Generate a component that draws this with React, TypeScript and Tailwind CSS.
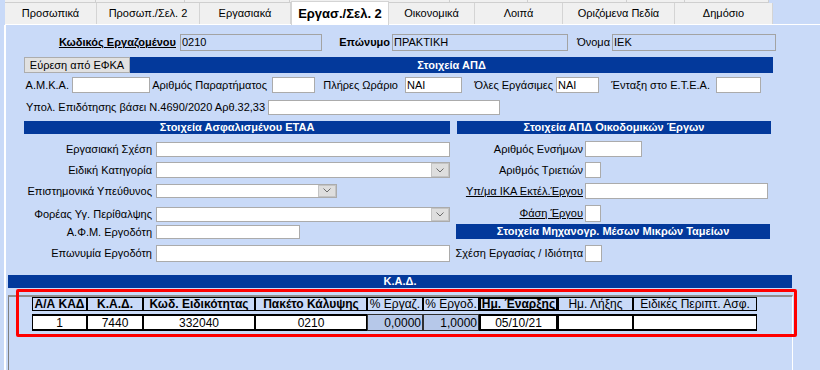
import React from 'react';

const TABS = [
  { label: 'Προσωπικά', w: 'w-[92px]' },
  { label: 'Προσωπ./Σελ. 2', w: 'w-[103px]' },
  { label: 'Εργασιακά', w: 'w-[91px]' },
  { label: 'Εργασ./Σελ. 2', w: 'w-[98px]', active: true },
  { label: 'Οικονομικά', w: 'w-[86px]' },
  { label: 'Λοιπά', w: 'w-[88px]' },
  { label: 'Οριζόμενα Πεδία', w: 'w-[112px]' },
  { label: 'Δημόσιο', w: 'w-[98px]' },
];

// second tab row, hidden behind the first one
const BACK_TABS = ['w-[91px]', 'w-[89px]', 'w-[105px]', 'w-[160px]', 'w-[78px]', 'w-[99px]', 'w-[58px]', 'w-[84px]'];

function Chevron() {
  return (
    <svg width="8" height="5" viewBox="0 0 8 5">
      <path d="M0.5 0.5 L4 4 L7.5 0.5" fill="none" stroke="#6b6b6b" strokeWidth="1" />
    </svg>
  );
}

interface FieldProps {
  className: string;
  value?: string;
  dropdown?: boolean;
  disabled?: boolean;
}

function Field({ className, value, dropdown, disabled }: FieldProps) {
  return (
    <div
      className={`flex shrink-0 items-center border ${
        disabled ? 'border-[#a3a3a3] bg-[#c9daf8]' : 'border-[#ababab] bg-white'
      } ${className}`}
    >
      <span className="flex-1 truncate pl-[1px] leading-none">{value}</span>
      {dropdown && (
        <span className="flex h-full w-[18px] items-end justify-center border border-[#c4c4c4] bg-[#dedede] pb-[3px]">
          <Chevron />
        </span>
      )}
    </div>
  );
}

function Bar({ className, children }: { className: string; children: React.ReactNode }) {
  return (
    <div className={`flex shrink-0 items-center justify-center bg-[#03399b] font-bold leading-none text-white ${className}`}>
      {children}
    </div>
  );
}

const COLS = [
  { h: 'Α/Α ΚΑΔ', v: '1', w: 'w-[55px]', bold: true },
  { h: 'Κ.Α.Δ.', v: '7440', w: 'w-[56px]', bold: true },
  { h: 'Κωδ. Ειδικότητας', v: '332040', w: 'w-[112px]', bold: true },
  { h: 'Πακέτο Κάλυψης', v: '0210', w: 'w-[112px]', bold: true },
  { h: '% Εργαζ.', v: '0,0000', w: 'w-[56px]', pct: true },
  { h: '% Εργοδ.', v: '1,0000', w: 'w-[56px]', pct: true },
  { h: 'Ημ. Έναρξης', v: '05/10/21', w: 'w-[79px]', bold: true, focus: true },
  { h: 'Ημ. Λήξης', v: '', w: 'w-[75px]' },
  { h: 'Ειδικές Περιπτ. Ασφ.', v: '', w: 'w-[124px]' },
];

export default function App() {
  return (
    <div className="relative flex h-[370px] w-[820px] flex-col overflow-hidden bg-[#c9daf8] font-['Liberation_Sans',Arial,sans-serif] text-[11px] text-black">
      {/* tab strip */}
      <div className="flex h-[3px] pl-[5px]">
        {BACK_TABS.map((w, i) => (
          <div key={i} className={`${w} border-r border-b border-[#cfcfcf] bg-[#f0f0f0]`} />
        ))}
      </div>
      <div className="flex h-[21px] pl-[5px]">
        {TABS.map((t) =>
          t.active ? (
            <div
              key={t.label}
              className={`${t.w} relative z-10 -mt-[2px] flex h-[24px] items-center justify-center border-x border-t border-[#d4d4d4] bg-white text-[13px] font-bold`}
            >
              {t.label}
            </div>
          ) : (
            <div
              key={t.label}
              className={`${t.w} flex items-center justify-center border-r border-[#d4d4d4] bg-[#f0f0f0]`}
            >
              {t.label}
            </div>
          ),
        )}
      </div>
      <div className="ml-[5px] h-px bg-white" />

      {/* panel */}
      <div className="flex flex-1 flex-col bg-[linear-gradient(to_right,#c9daf8_4px,#ffffff_4px,#ffffff_6px,#c9daf8_6px)]">
        {/* row 1 */}
        <div className="mt-[9px] flex h-[17px] items-stretch">
          <div className="flex w-[178px] items-center justify-end pr-[2px] font-bold underline">Κωδικός Εργαζομένου</div>
          <Field className="ml-[2px] w-[142px]" value="0210" disabled />
          <div className="flex w-[70px] items-center justify-end pr-[2px] font-bold">Επώνυμο</div>
          <Field className="w-[176px]" value="ΠΡΑΚΤΙΚΗ" disabled />
          <div className="flex w-[44px] items-center justify-end pr-[2px]">Όνομα</div>
          <Field className="w-[164px]" value="ΙΕΚ" disabled />
        </div>

        {/* row 2 */}
        <div className="mt-[6px] flex h-[16px]">
          <div className="ml-[24px] flex w-[106px] items-center justify-center border border-[#adadad] bg-[#e1e1e1] leading-none">
            Εύρεση από ΕΦΚΑ
          </div>
          <Bar className="w-[643px]">Στοιχεία ΑΠΔ</Bar>
        </div>

        {/* row 3 */}
        <div className="mt-[4px] flex h-[16px] whitespace-nowrap">
          <div className="flex w-[72px] items-center justify-end pr-[3px]">Α.Μ.Κ.Α.</div>
          <Field className="w-[78px]" />
          <div className="flex w-[122px] items-center justify-end pr-[5px]">Αριθμός Παραρτήματος</div>
          <Field className="w-[43px]" />
          <div className="flex w-[90px] items-center justify-end pr-[7px]">Πλήρες Ωράριο</div>
          <Field className="w-[57px]" value="ΝΑΙ" />
          <div className="flex w-[94px] items-center justify-end pr-[3px]">Όλες Εργάσιμες</div>
          <Field className="w-[43px]" value="ΝΑΙ" />
          <div className="flex w-[117px] items-center justify-end pr-[6px]">Ένταξη στο Ε.Τ.Ε.Α.</div>
          <Field className="w-[45px]" />
        </div>

        {/* row 4 */}
        <div className="mt-[7px] flex h-[15px] whitespace-nowrap">
          <div className="flex w-[268px] items-center pl-[26px]">Υπολ. Επιδότησης βάσει Ν.4690/2020 Αρθ.32,33</div>
          <Field className="w-[232px]" />
        </div>

        {/* section headers */}
        <div className="mt-[6px] flex h-[13px]">
          <Bar className="ml-[24px] w-[426px]">Στοιχεία Ασφαλισμένου ΕΤΑΑ</Bar>
          <Bar className="ml-[7px] w-[314px]">Στοιχεία ΑΠΔ Οικοδομικών Έργων</Bar>
        </div>

        {/* two column rows */}
        <div className="mt-[7px] flex h-[16px] whitespace-nowrap">
          <div className="flex w-[450px]">
            <div className="flex w-[152px] items-center justify-end">Εργασιακή Σχέση</div>
            <Field className="ml-[4px] mt-[1px] h-[15px] w-[294px]" />
          </div>
          <div className="flex w-[133px] items-center justify-end">Αριθμός Ενσήμων</div>
          <Field className="ml-[2px] w-[57px]" />
        </div>

        <div className="mt-[5px] flex h-[16px] whitespace-nowrap">
          <div className="flex w-[450px]">
            <div className="flex w-[152px] items-center justify-end">Ειδική Κατηγορία</div>
            <Field className="ml-[4px] w-[294px]" dropdown />
          </div>
          <div className="flex w-[133px] items-center justify-end">Αριθμός Τριετιών</div>
          <Field className="ml-[2px] w-[16px]" />
        </div>

        <div className="mt-[5px] flex h-[16px] whitespace-nowrap">
          <div className="flex w-[450px]">
            <div className="flex w-[152px] items-center justify-end">Επιστημονικά Υπεύθυνος</div>
            <Field className="ml-[4px] mt-[1px] h-[14px] w-[181px]" dropdown />
          </div>
          <div className="flex w-[133px] items-center justify-end underline">Υπ/μα ΙΚΑ Εκτέλ.Έργου</div>
          <Field className="ml-[2px] w-[183px]" />
        </div>

        <div className="mt-[6px] flex h-[17px] whitespace-nowrap">
          <div className="flex w-[450px] items-end">
            <div className="flex h-[15px] w-[152px] items-center justify-end">Φορέας Υγ. Περίθαλψης</div>
            <Field className="ml-[4px] h-[15px] w-[294px]" dropdown />
          </div>
          <div className="flex w-[133px] items-center justify-end underline">Φάση Έργου</div>
          <Field className="ml-[2px] w-[16px]" />
        </div>

        <div className="mt-[2px] flex h-[15px] whitespace-nowrap">
          <div className="flex w-[450px] items-end">
            <div className="flex h-[14px] w-[152px] items-center justify-end">Α.Φ.Μ. Εργοδότη</div>
            <Field className="ml-[4px] h-[14px] w-[144px]" />
          </div>
          <Bar className="ml-[6px] w-[314px]">Στοιχεία Μηχανογρ. Μέσων Μικρών Ταμείων</Bar>
        </div>

        <div className="mt-[6px] flex h-[17px] whitespace-nowrap">
          <div className="flex w-[450px]">
            <div className="flex w-[152px] items-center justify-end">Επωνυμία Εργοδότη</div>
            <Field className="ml-[4px] w-[294px]" />
          </div>
          <div className="flex w-[133px] items-center justify-end">Σχέση Εργασίας / Ιδιότητα</div>
          <Field className="ml-[2px] w-[17px]" />
        </div>

        {/* K.A.Δ. grid */}
        <Bar className="ml-[8px] mt-[13px] h-[13px] w-[784px]">Κ.Α.Δ.</Bar>
        <div className="ml-[8px] mt-[7px] w-[785px] flex-1 border-t-2 border-l border-r border-t-[#8f8f8f] border-l-[#808080] border-r-white">
          <div className="ml-[23px] flex h-[14px]">
            {COLS.map((c) => (
              <div
                key={c.h}
                className={`${c.w} flex shrink-0 items-center justify-center whitespace-nowrap text-[12px] leading-none ${
                  c.focus ? 'border-2' : 'border'
                } border-black ${c.bold ? 'font-bold' : ''}`}
              >
                {c.h}
              </div>
            ))}
          </div>
          <div className="ml-[23px] mt-[3px] flex h-[17px]">
            {COLS.map((c) => (
              <div
                key={c.h}
                className={`${c.w} flex shrink-0 items-center whitespace-nowrap text-[12px] leading-none ${
                  c.pct
                    ? 'justify-end border border-[#303030] bg-[#b6c8e9] pr-[1px]'
                    : c.focus
                      ? 'justify-center border-2 border-black bg-white'
                      : 'justify-center border-x border-y-2 border-black bg-white'
                }`}
              >
                {c.v}
              </div>
            ))}
          </div>
        </div>
      </div>

      {/* annotation frame drawn over the grid */}
      <div className="absolute left-[16px] top-[289px] h-[48px] w-[781px] rounded-[2px] border-[3px] border-[#ff0000]" />
    </div>
  );
}
